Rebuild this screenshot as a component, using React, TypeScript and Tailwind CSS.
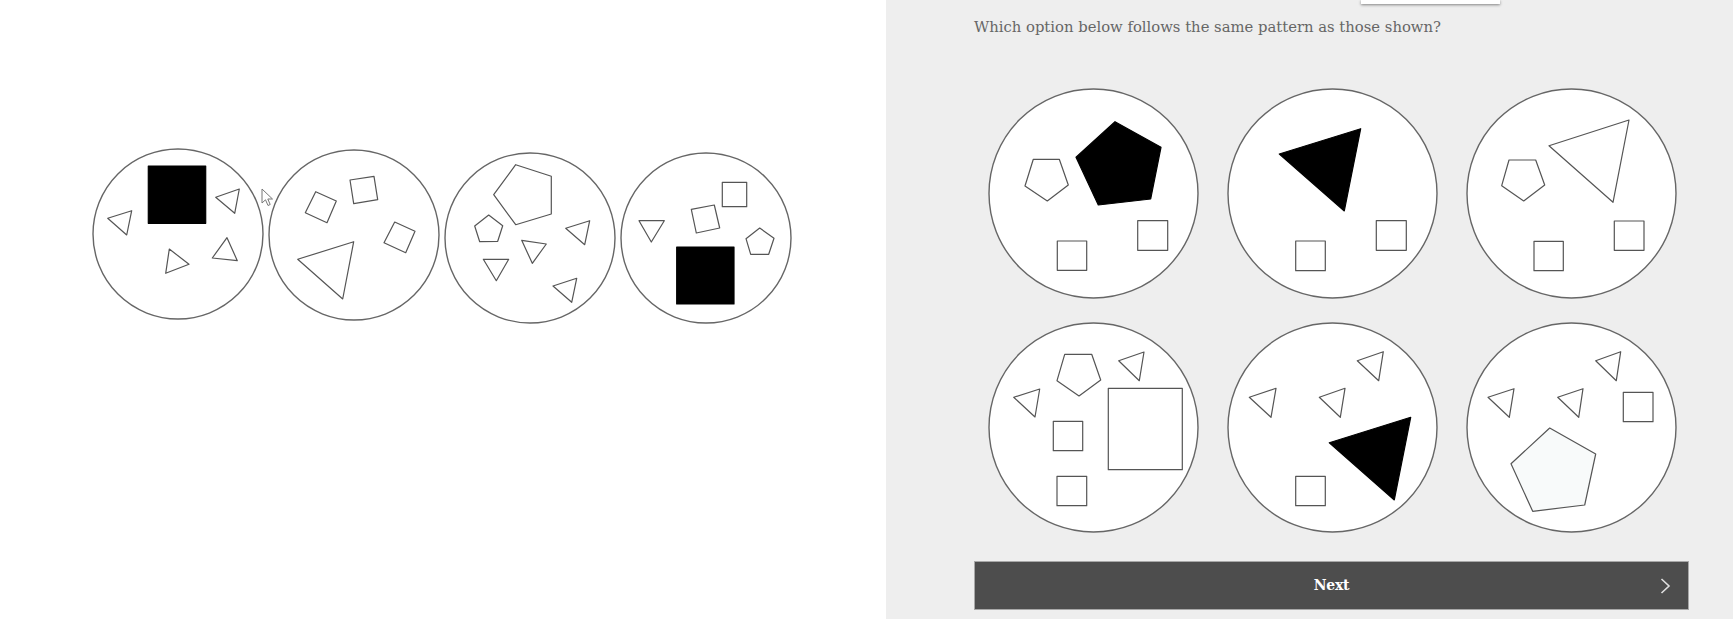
import React from "react";

type Shape =
  | { kind: "poly"; pts: number[][]; fill?: string }
  | { kind: "rect"; x: number; y: number; w: number; h: number; fill?: string };

const tri = (pts: number[][], fill?: string): Shape => ({ kind: "poly", pts, fill });
const sq = (x: number, y: number, w: number, h: number, fill?: string): Shape => ({ kind: "rect", x, y, w, h, fill });

// question row (circle boxes are 172px)
const sequence: { shapes: Shape[]; offset: string }[] = [
  {
    offset: "mt-0",
    shapes: [
      sq(56.3, 18, 57.4, 57.3, "#000"),
      tri([[15.7, 70.3], [39.7, 62.7], [34.7, 87]]),
      tri([[123.7, 49.3], [147.3, 41], [142.7, 65.3]]),
      tri([[77.3, 101], [97, 116.3], [73.7, 125.3]]),
      tri([[135, 89.7], [145.3, 112.7], [120.3, 110]]),
    ],
  },
  {
    offset: "mt-px",
    shapes: [
      tri([[47.7, 42.7], [68.3, 52], [59, 73.7], [37.3, 63.7]]),
      tri([[82, 31], [106, 27.3], [109.7, 50.7], [85.7, 54.7]]),
      tri([[126.7, 73], [147, 82.3], [137.7, 103.7], [116, 93.7]]),
      tri([[29.7, 110.3], [85.7, 92.7], [74.7, 150]]),
    ],
  },
  {
    offset: "mt-1",
    shapes: [
      tri([[71.7, 12.7], [107.3, 24.3], [107.3, 62], [71.7, 72.7], [49.7, 42.7]]),
      tri([[44.7, 63], [58.7, 73.7], [53.7, 89.3], [35.7, 89.7], [30.7, 74]]),
      tri([[121.7, 76.3], [145.7, 68.7], [140.7, 92.7]]),
      tri([[77.7, 88.3], [102.3, 92], [88.3, 111.3]]),
      tri([[39.3, 107.3], [64.7, 107.3], [52.3, 128.7]]),
      tri([[109, 134], [132.7, 126.3], [127.7, 150.3]]),
    ],
  },
  {
    offset: "mt-1",
    shapes: [
      tri([[19, 68.7], [44.3, 68.7], [31.3, 90]]),
      tri([[71.3, 57.3], [94.3, 53], [99.7, 76], [76.3, 81]]),
      sq(102.3, 30.3, 24.4, 24.4),
      tri([[139.7, 76], [154, 86.3], [148.7, 102.3], [130.7, 102.3], [126, 86.7]]),
      sq(56.7, 95, 57.3, 57, "#000"),
    ],
  },
];

// answer options (circle boxes are 211px)
const options: Shape[][] = [
  [
    tri([[127, 33.7], [173, 59.3], [162.7, 111], [110.3, 117], [88, 69.3]], "#000"),
    tri([[45.3, 71.3], [71.3, 71.3], [80.3, 97], [59.3, 113], [37, 98]]),
    sq(69.3, 153, 29.4, 29.3),
    sq(149.7, 132.7, 30, 29.6),
  ],
  [
    tri([[52.3, 66], [133.7, 40.7], [117.3, 123]], "#000"),
    sq(68.7, 153, 29.6, 29.7),
    sq(149.3, 132.7, 30, 29.6),
  ],
  [
    tri([[83, 57.7], [163, 32], [147, 114.3]]),
    tri([[43, 72], [69.7, 72], [78.7, 97], [57.7, 113], [35.7, 97.7]]),
    sq(68, 153.3, 29.3, 29.4),
    sq(148.3, 133, 29.7, 29.3),
  ],
  [
    tri([[76.7, 32.3], [103.7, 32.3], [112.7, 58], [91, 74], [69, 58.7]]),
    tri([[130.7, 38.7], [156, 30], [151.3, 58.7]]),
    tri([[25.7, 75.3], [51.7, 67], [47, 95]]),
    sq(65.3, 99.3, 29.4, 29.4),
    sq(120.3, 66.3, 74, 81.4),
    sq(69, 154.3, 29.7, 29.4),
  ],
  [
    tri([[130.3, 38.7], [156.3, 29.7], [151.7, 58.7]]),
    tri([[22.3, 75.3], [49, 66.3], [44, 95.3]]),
    tri([[92.3, 75.3], [118, 66.3], [113.3, 95.3]]),
    tri([[102.3, 120.7], [183.7, 95.3], [167.3, 178]], "#000"),
    sq(68.7, 154.3, 29.6, 29.4),
  ],
  [
    tri([[129.7, 38.7], [154.7, 29.7], [150.3, 58.7]]),
    tri([[22, 75.3], [48, 66.7], [43.3, 95.3]]),
    tri([[91.7, 75.3], [117, 66.7], [112.7, 95.3]]),
    sq(157.3, 70.3, 29.7, 29.4),
    tri([[83.7, 106], [129.7, 132], [118.7, 183], [66.7, 189.3], [45, 141.7]], "#f8fafa"),
  ],
];

function ShapeEl({ s }: { s: Shape }) {
  const filled = s.fill === "#000";
  const common = {
    fill: s.fill ?? "none",
    stroke: filled ? "#000" : "#555",
    strokeWidth: 1.2,
    strokeLinejoin: "round" as const,
  };
  if (s.kind === "rect") return <rect x={s.x} y={s.y} width={s.w} height={s.h} {...common} />;
  return <polygon points={s.pts.map((p) => p.join(",")).join(" ")} {...common} />;
}

function Disc({ size, shapes }: { size: number; shapes: Shape[] }) {
  const c = size / 2;
  return (
    <svg width={size} height={size} viewBox={`0 0 ${size} ${size}`} className="block">
      <circle cx={c} cy={c} r={c - 1} fill="#fff" stroke="#666" strokeWidth={1.4} />
      {shapes.map((s, i) => (
        <ShapeEl key={i} s={s} />
      ))}
    </svg>
  );
}

export default function App() {
  return (
    <div className="flex h-[619px] w-full overflow-hidden" style={{ fontFamily: '"DejaVu Serif", "Liberation Serif", serif' }}>
      {/* Left: the sequence */}
      <div className="relative w-[886px] shrink-0 bg-white">
        <div className="flex items-start gap-[4px] pl-[92px] pt-[148px]">
          {sequence.map((d, i) => (
            <div key={i} className={d.offset}>
              <Disc size={172} shapes={d.shapes} />
            </div>
          ))}
        </div>
        {/* mouse pointer */}
        <svg className="absolute left-[261px] top-[188px]" width="13" height="19" viewBox="0 0 13 19">
          <path d="M1 1 L1 15 L4.5 11.8 L7 17.5 L9.2 16.5 L6.8 11 L11.5 11 Z" fill="#fff" stroke="#777" strokeWidth="1" strokeLinejoin="round" />
        </svg>
      </div>

      {/* Right: the options */}
      <div className="flex-1 bg-[#eeeeee] pl-[88px] pr-[44px]">
        <div className="ml-[387px] h-[4px] w-[139px] bg-white shadow-[0_1px_3px_rgba(0,0,0,0.45)]" />
        <p className="mt-[16px] text-[14.8px] leading-[14px] text-[#666]">
          Which option below follows the same pattern as those shown?
        </p>
        <div className="mt-[54px] grid grid-cols-[211px_211px_211px] gap-x-[28px] gap-y-[23px] pl-[14px]">
          {options.map((o, i) => (
            <button key={i} className="block cursor-pointer">
              <Disc size={211} shapes={o} />
            </button>
          ))}
        </div>
        <button className="relative mt-[28px] flex h-[49px] w-[715px] items-center justify-center border border-[#a8a8a8] bg-[#4d4d4d] text-[14px] font-bold tracking-[-0.3px] text-white">
          Next
          <svg className="absolute right-[17px] top-[16px]" width="11" height="16" viewBox="0 0 11 16">
            <path d="M1.5 1 L9 8 L1.5 15" fill="none" stroke="#e0e0e0" strokeWidth="1.6" />
          </svg>
        </button>
      </div>
    </div>
  );
}
